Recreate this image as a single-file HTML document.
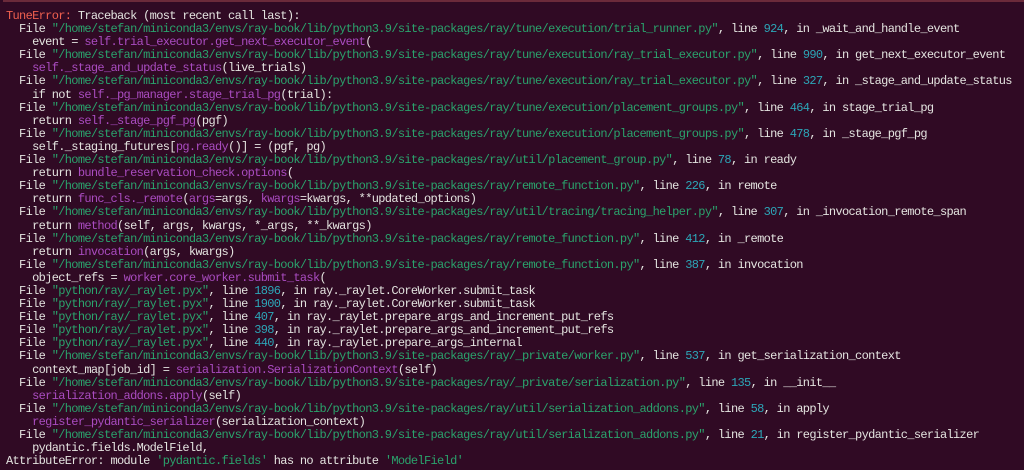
<!DOCTYPE html>
<html><head><meta charset="utf-8"><style>
html,body{margin:0;padding:0;background:#300a24;width:1024px;height:470px;overflow:hidden}
.top{position:absolute;left:3px;right:0;top:0;height:2px;background:#6b2a3a}
pre{position:absolute;left:6px;top:10px;margin:0;font-family:"Liberation Mono","DejaVu Sans Mono",monospace;font-size:12px;letter-spacing:-0.67px;line-height:13.1px;color:#e4e4e0;white-space:pre}
.g{color:#2aa36c}.p{color:#a94cc0}.c{color:#2ca6b8}.r{color:#f0604f}
</style></head><body><div class="top"></div><pre><span class="r">TuneError:</span> Traceback (most recent call last):
  File <span class="g">"/home/stefan/miniconda3/envs/ray-book/lib/python3.9/site-packages/ray/tune/execution/trial_runner.py"</span>, line <span class="c">924</span>, in _wait_and_handle_event
    event = <span class="p">self.trial_executor.get_next_executor_event</span>(
  File <span class="g">"/home/stefan/miniconda3/envs/ray-book/lib/python3.9/site-packages/ray/tune/execution/ray_trial_executor.py"</span>, line <span class="c">990</span>, in get_next_executor_event
    <span class="p">self._stage_and_update_status</span>(live_trials)
  File <span class="g">"/home/stefan/miniconda3/envs/ray-book/lib/python3.9/site-packages/ray/tune/execution/ray_trial_executor.py"</span>, line <span class="c">327</span>, in _stage_and_update_status
    if not <span class="p">self._pg_manager.stage_trial_pg</span>(trial):
  File <span class="g">"/home/stefan/miniconda3/envs/ray-book/lib/python3.9/site-packages/ray/tune/execution/placement_groups.py"</span>, line <span class="c">464</span>, in stage_trial_pg
    return <span class="p">self._stage_pgf_pg</span>(pgf)
  File <span class="g">"/home/stefan/miniconda3/envs/ray-book/lib/python3.9/site-packages/ray/tune/execution/placement_groups.py"</span>, line <span class="c">478</span>, in _stage_pgf_pg
    self._staging_futures[<span class="p">pg.ready</span>()] = (pgf, pg)
  File <span class="g">"/home/stefan/miniconda3/envs/ray-book/lib/python3.9/site-packages/ray/util/placement_group.py"</span>, line <span class="c">78</span>, in ready
    return <span class="p">bundle_reservation_check.options</span>(
  File <span class="g">"/home/stefan/miniconda3/envs/ray-book/lib/python3.9/site-packages/ray/remote_function.py"</span>, line <span class="c">226</span>, in remote
    return <span class="p">func_cls._remote</span>(<span class="p">args</span>=args, <span class="p">kwargs</span>=kwargs, **updated_options)
  File <span class="g">"/home/stefan/miniconda3/envs/ray-book/lib/python3.9/site-packages/ray/util/tracing/tracing_helper.py"</span>, line <span class="c">307</span>, in _invocation_remote_span
    return <span class="p">method</span>(self, args, kwargs, *_args, **_kwargs)
  File <span class="g">"/home/stefan/miniconda3/envs/ray-book/lib/python3.9/site-packages/ray/remote_function.py"</span>, line <span class="c">412</span>, in _remote
    return <span class="p">invocation</span>(args, kwargs)
  File <span class="g">"/home/stefan/miniconda3/envs/ray-book/lib/python3.9/site-packages/ray/remote_function.py"</span>, line <span class="c">387</span>, in invocation
    object_refs = <span class="p">worker.core_worker.submit_task</span>(
  File <span class="g">"python/ray/_raylet.pyx"</span>, line <span class="c">1896</span>, in ray._raylet.CoreWorker.submit_task
  File <span class="g">"python/ray/_raylet.pyx"</span>, line <span class="c">1900</span>, in ray._raylet.CoreWorker.submit_task
  File <span class="g">"python/ray/_raylet.pyx"</span>, line <span class="c">407</span>, in ray._raylet.prepare_args_and_increment_put_refs
  File <span class="g">"python/ray/_raylet.pyx"</span>, line <span class="c">398</span>, in ray._raylet.prepare_args_and_increment_put_refs
  File <span class="g">"python/ray/_raylet.pyx"</span>, line <span class="c">440</span>, in ray._raylet.prepare_args_internal
  File <span class="g">"/home/stefan/miniconda3/envs/ray-book/lib/python3.9/site-packages/ray/_private/worker.py"</span>, line <span class="c">537</span>, in get_serialization_context
    context_map[job_id] = <span class="p">serialization.SerializationContext</span>(self)
  File <span class="g">"/home/stefan/miniconda3/envs/ray-book/lib/python3.9/site-packages/ray/_private/serialization.py"</span>, line <span class="c">135</span>, in __init__
    <span class="p">serialization_addons.apply</span>(self)
  File <span class="g">"/home/stefan/miniconda3/envs/ray-book/lib/python3.9/site-packages/ray/util/serialization_addons.py"</span>, line <span class="c">58</span>, in apply
    <span class="p">register_pydantic_serializer</span>(serialization_context)
  File <span class="g">"/home/stefan/miniconda3/envs/ray-book/lib/python3.9/site-packages/ray/util/serialization_addons.py"</span>, line <span class="c">21</span>, in register_pydantic_serializer
    pydantic.fields.ModelField,
AttributeError: module <span class="g">'pydantic.fields'</span> has no attribute <span class="g">'ModelField'</span></pre></body></html>
